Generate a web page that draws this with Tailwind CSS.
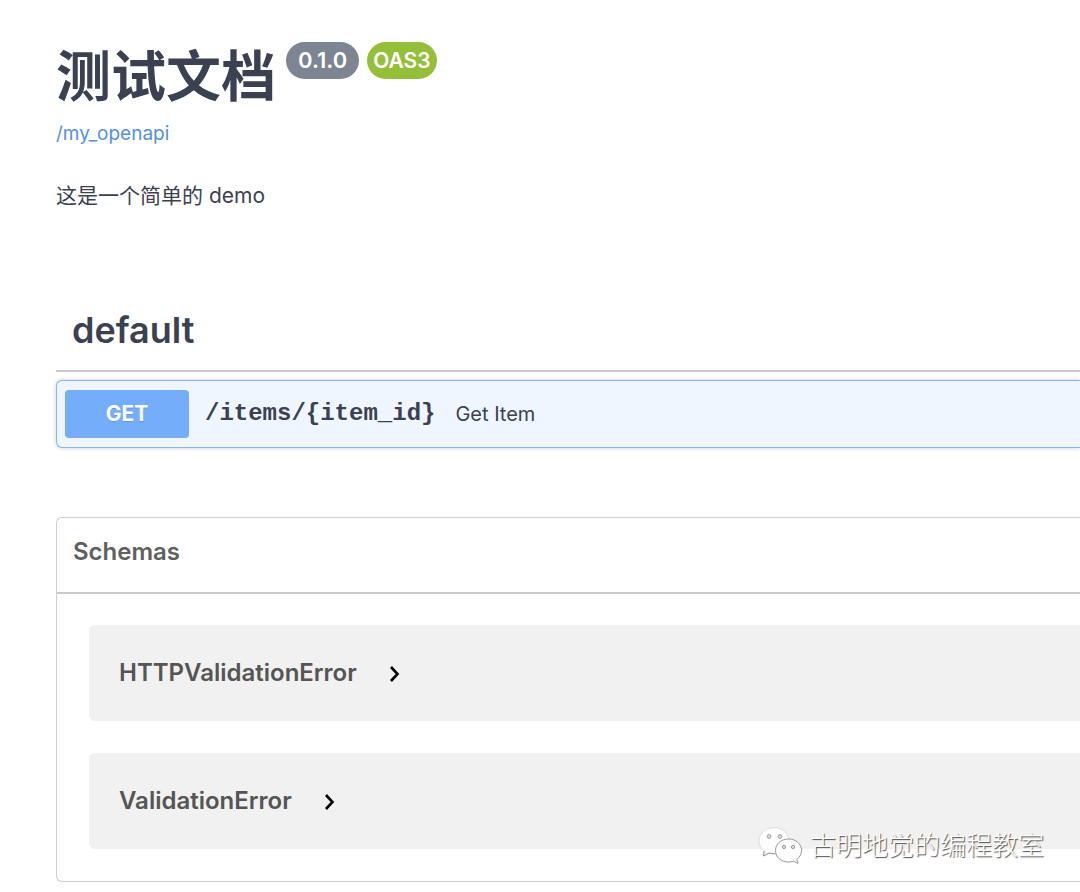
<!DOCTYPE html>
<html lang="zh-CN">
<head>
    <meta charset="UTF-8">
    <meta name="viewport" content="width=device-width, initial-scale=1.0">
    <title>测试文档</title>
    <script src="https://cdn.jsdelivr.net/npm/@tailwindcss/browser@4"></script>
</head>
<body class="relative bg-white pl-14 font-[Inter,'Noto_Sans_CJK_SC',sans-serif] text-[#3b4151]">
    <header class="pt-[42px]">
        <div class="flex items-start gap-2">
            <h1 class="pt-1.5 text-[55px] leading-14 font-bold">测试文档</h1>
            <span class="ml-0.5 rounded-full bg-[#7d8492] px-3 text-[22px] leading-[37px] font-semibold text-white">0.1.0</span>
            <span class="rounded-full bg-[#93c038] px-1.5 text-[21px] leading-[37px] font-semibold text-white">OAS3</span>
        </div>
        <a href="/my_openapi" class="mt-4 inline-block text-[19px] leading-7 text-[#5590e0]">/my_openapi</a>
        <p class="mt-8 text-[21px] leading-8">这是一个简单的 demo</p>
    </header>

    <main>
        <section class="mt-[94px]">
            <h2 class="border-b-2 border-[#c9cccf] pb-4 pl-4 text-[36px] leading-12 font-semibold">default</h2>
            <button class="mt-2 flex h-[68px] w-full items-center rounded-l-md border border-r-0 border-[#84b6f7] bg-[#eff6ff] pl-2 text-left shadow-[0_0_4px_rgba(0,0,0,0.2)]">
                <span class="w-[124px] rounded bg-[#74adf9] text-center text-[21px] leading-12 font-bold text-white text-shadow-[0_1px_0_rgba(0,0,0,0.15)]">GET</span>
                <span class="pl-4 font-['Liberation_Mono',monospace] text-[24px] font-bold">/items/{item_id}</span>
                <span class="pl-5 text-[20px]">Get Item</span>
            </button>
        </section>

        <section class="mt-[69px] rounded-l-md border border-r-0 border-[#cdced1]">
            <h3 class="border-b-2 border-[#c9cccf] pt-3.5 pb-5 pl-4 text-[24px] leading-10 font-semibold text-[#606060]">Schemas</h3>
            <div class="flex flex-col gap-8 pt-[31px] pb-8 pl-8">
                <button class="flex h-24 items-center gap-7 rounded-l-md bg-[#f1f1f1] pl-[30px] text-[24px] font-semibold text-[#555555]">
                    HTTPValidationError
                    <svg class="size-5" viewBox="0 0 20 20" fill="none" stroke="#000" stroke-width="2.6"><path d="M6 4l6.5 7L6 18"/></svg>
                </button>
                <button class="flex h-24 items-center gap-7 rounded-l-md bg-[#f1f1f1] pl-[30px] text-[24px] font-semibold text-[#555555]">
                    ValidationError
                    <svg class="size-5" viewBox="0 0 20 20" fill="none" stroke="#000" stroke-width="2.6"><path d="M6 4l6.5 7L6 18"/></svg>
                </button>
            </div>
        </section>
    </main>

    <!-- watermark -->
    <div class="absolute right-9 bottom-4 flex items-center gap-2 text-[26px] leading-10 font-light text-white text-shadow-[1px_1px_1px_rgba(0,0,0,0.7)]">
        <svg class="h-10 w-11" viewBox="0 0 44 40" fill="#fdfdfd" stroke-width="1">
            <path d="M16 1.500C7.500 1.500 1 7.500 1 15c0 4.500 2.200 8 6 10.500L5.500 30l5.500-3c2 .7 4 .8 6 .8C25 27.500 31 22 31 15S24.500 1.500 16 1.500z" stroke="#dcdcdc"/>
            <path d="M6 25l-.5 5 5.500-3c2 .7 4 .8 6 .8" fill="none" stroke="#999"/>
            <path d="M30.500 13C23 13 17.500 18 17.500 24.500S23 36 30.500 36c2 0 3.500-.3 5-.8l4.500 2.300-1.300-4C41.500 31.500 43.500 28.500 43.500 24.500 43.500 18 38 13 30.500 13z" stroke="#999"/>
            <g fill="#e4e4e4" stroke="#999">
                <circle cx="11" cy="10.500" r="1.800"/>
                <circle cx="22" cy="10.500" r="1.800"/>
                <circle cx="26" cy="21" r="1.600"/>
                <circle cx="35" cy="21" r="1.600"/>
            </g>
        </svg>
        古明地觉的编程教室
    </div>
</body>
</html>
